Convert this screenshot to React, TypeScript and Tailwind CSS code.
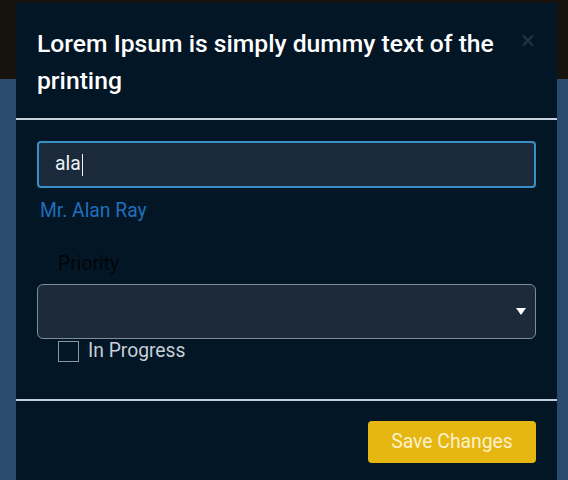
import * as React from "react";

const font = { fontFamily: "Roboto, 'Liberation Sans', sans-serif" };

export const EditTaskModal = () => {
  return (
    <div className="relative h-[480px] w-[568px] overflow-hidden" style={font}>
      {/* page behind the modal */}
      <div className="flex h-full flex-col">
        <div className="h-[79px] bg-[#16130f]" />
        <div className="flex-1 bg-[#2b4b6d]" />
      </div>

      <div className="absolute left-[16px] top-[3px] flex h-[480px] w-[541px] flex-col bg-[#031626]">
        {/* header */}
        <div className="flex items-start justify-between pl-[21px] pr-[22px] pt-[22px] pb-[19px]">
          <h2 className="w-[470px] text-[24.7px] leading-[37px] font-medium text-white">
            Lorem Ipsum is simply dummy text of the printing
          </h2>
          <span className="mt-[2px] text-[26px] leading-[26px] text-[#1e3345]">&times;</span>
        </div>
        <div className="h-[2px] bg-[#c6d2de]" />

        {/* body */}
        <div className="flex flex-col px-[21px] pt-[21px]">
          <div className="flex h-[47px] items-center rounded-[4px] border-2 border-[#3a8fc6] bg-[#1b2a3a] pl-[16px]">
            <span className="text-[19.3px] text-[#eef2f6]">ala</span>
            <span className="ml-[1px] h-[22px] w-[1.5px] bg-[#eef2f6]" />
          </div>
          <div className="mt-[12px] pl-[3px] text-[19.3px] leading-[22px] text-[#1f6fbd]">Mr. Alan Ray</div>

          <div className="mt-[31px] pl-[21px] text-[19.3px] leading-[22px] text-[#020508]">Priority</div>
          <div className="mt-[9px] flex h-[55px] items-center justify-end rounded-[6px] border-[1.5px] border-[#7e8c9a] bg-[#1d2a39] pr-[9px]">
            <svg width="10" height="8" viewBox="0 0 10 8">
              <path d="M0 0 L10 0 L5 7 Z" fill="#ffffff" />
            </svg>
          </div>
          <label className="flex items-center gap-[9px] pl-[21px]">
            <span className="mt-[2px] h-[21px] w-[21px] border-[1.5px] border-[#8a96a2]" />
            <span className="text-[19.3px] leading-[22px] text-[#c7cfd8]">In Progress</span>
          </label>
        </div>

        <div className="mt-[37px] h-[2px] bg-[#c2ced9]" />

        {/* footer */}
        <div className="flex justify-end px-[21px] pt-[20px]">
          <button className="h-[42px] w-[168px] rounded-[4px] bg-[#e5b710] text-[19.3px] text-[#fdf1cc]">
            Save Changes
          </button>
        </div>
      </div>
    </div>
  );
};

export default EditTaskModal;
